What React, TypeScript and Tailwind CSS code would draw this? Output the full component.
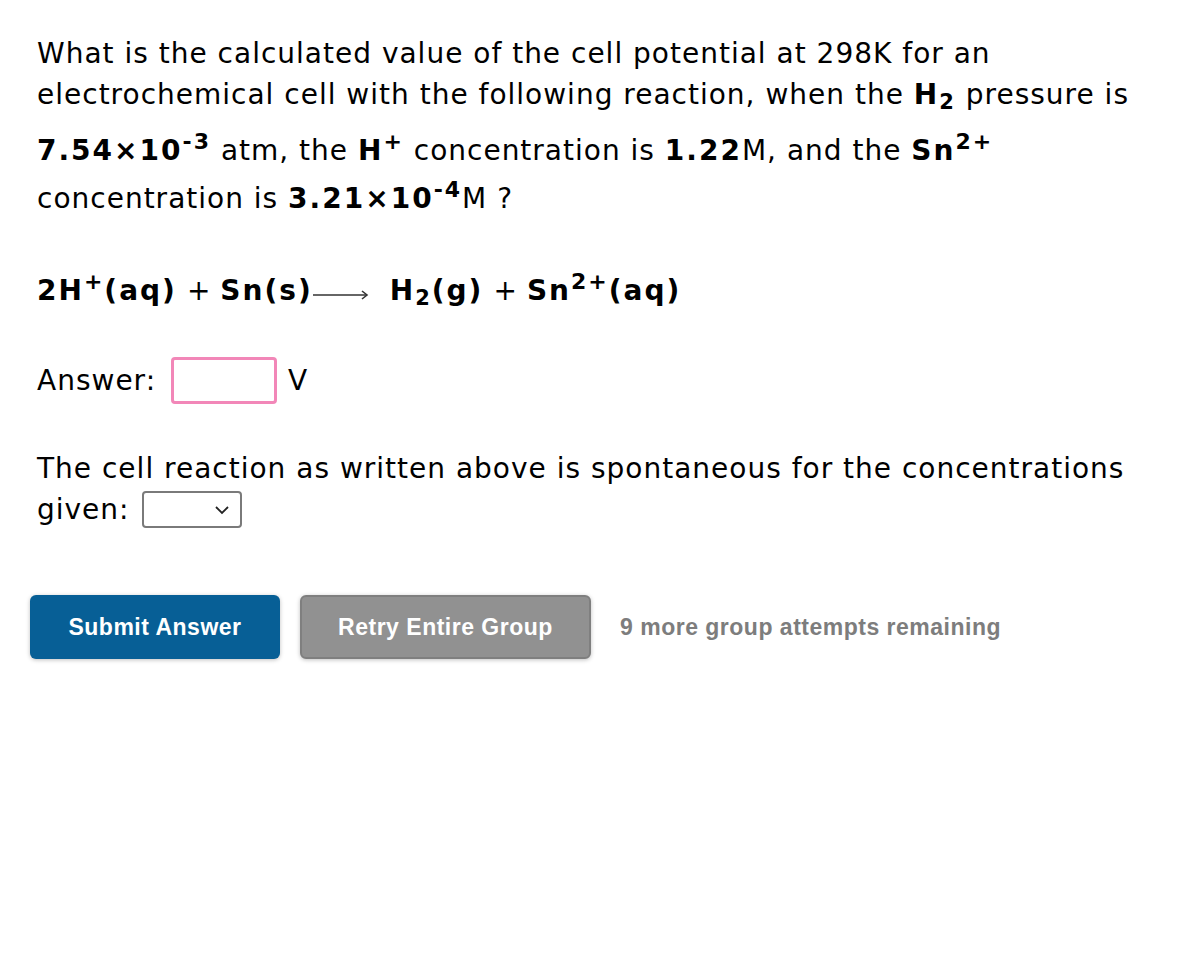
export default function App() {
  const sans = "font-['Verdana','DejaVu_Sans',sans-serif]";
  const btn = "font-['Liberation_Sans',Arial,sans-serif]";
  const bold = "font-bold tracking-[2px]";

  return (
    <div className={`min-h-screen bg-white text-black ${sans}`}>
      <div className="pl-[37px] pt-[33px] pr-4">
        {/* Question */}
        <div className="text-[28px] tracking-[1px]">
          <div className="leading-[41px]">What is the calculated value of the cell potential at 298K for an</div>
          <div className="leading-[41px]">
            electrochemical cell with the following reaction, when the{" "}
            <b className={bold}>
              H<sub className="text-[21px]">2</sub>
            </b>{" "}
            pressure is
          </div>
          <div className="leading-[41px] mt-[15px]">
            <b className={bold}>
              7.54×10<sup className="text-[22px]">-3</sup>
            </b>{" "}
            atm, the{" "}
            <b className={bold}>
              H<sup className="text-[22px]">+</sup>
            </b>{" "}
            concentration is <b className={bold}>1.22</b>M, and the{" "}
            <b className={bold}>
              Sn<sup className="text-[22px]">2+</sup>
            </b>
          </div>
          <div className="leading-[41px] mt-[7px]">
            concentration is{" "}
            <b className={bold}>
              3.21×10<sup className="text-[22px]">-4</sup>
            </b>
            M ?
          </div>
        </div>

        {/* Reaction */}
        <div className="mt-[52px] text-[28px] font-bold leading-[40px] tracking-[2px] flex items-baseline font-['DejaVu_Sans',sans-serif]">
          <span>
            2H<sup className="text-[22px]">+</sup>(aq)
          </span>
          <span className="mx-[10px] font-normal tracking-normal">+</span>
          <span>Sn(s)</span>
          <svg width="56" height="12" viewBox="0 0 56 12" className="self-center mt-[8px]">
            <line x1="0" y1="6" x2="54" y2="6" stroke="#333" strokeWidth="1.6" />
            <path d="M49 2 L54 6 L49 10" fill="none" stroke="#333" strokeWidth="1.6" />
          </svg>
          <span className="ml-[21px]">
            H<sub className="text-[21px]">2</sub>(g)
          </span>
          <span className="mx-[10px] font-normal tracking-normal">+</span>
          <span>
            Sn<sup className="text-[22px]">2+</sup>(aq)
          </span>
        </div>

        {/* Answer */}
        <div className="mt-[46px] flex items-center text-[28px] leading-[41px] tracking-[1px]">
          <span>Answer:</span>
          <div className="ml-[15px] w-[106px] h-[47px] rounded-[4px] border-[3px] border-[#f287b8] bg-white" />
          <span className="ml-[11px]">V</span>
        </div>

        {/* Spontaneous */}
        <div className="mt-[44px] text-[28px] leading-[41px] tracking-[1px]">
          <div>The cell reaction as written above is spontaneous for the concentrations</div>
          <div className="flex items-center h-[41px]">
            <span>given:</span>
            <div className="ml-[12px] flex w-[100px] h-[37px] rounded-[4px] border-2 border-[#7a7a7a] items-center justify-end pr-[10px]">
              <svg width="16" height="10" viewBox="0 0 16 10">
                <path d="M2 2 L8 8 L14 2" fill="none" stroke="#222" strokeWidth="1.8" />
              </svg>
            </div>
          </div>
        </div>
      </div>

      {/* Buttons */}
      <div className={`mt-[65px] pl-[30px] flex items-center ${btn}`}>
        <button className="w-[250px] h-[64px] rounded-[6px] bg-[#075f96] text-white text-[23px] tracking-[0.5px] font-bold shadow-[0_1px_4px_rgba(0,0,0,0.25)]">
          Submit Answer
        </button>
        <button className="ml-[20px] w-[291px] h-[64px] rounded-[6px] bg-[#919191] border-2 border-[#7f7f7f] text-white text-[23px] tracking-[0.5px] font-bold shadow-[0_1px_4px_rgba(0,0,0,0.25)]">
          Retry Entire Group
        </button>
        <span className="ml-[29px] text-[23px] tracking-[0.5px] font-bold text-[#7d7d7d]">
          9 more group attempts remaining
        </span>
      </div>
    </div>
  );
}
